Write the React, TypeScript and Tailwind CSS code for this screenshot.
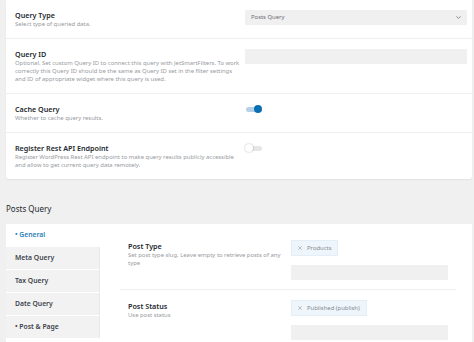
import { ChevronDown, X } from 'lucide-react';

function Toggle({ on }: { on: boolean }) {
  return (
    <div className="relative h-[10px] w-[18px] flex items-center">
      <div className={`h-[5px] w-[16px] ml-[1px] rounded-full ${on ? 'bg-[#b6d0e6]' : 'bg-[#e6e6e8]'}`} />
      <div
        className={`absolute top-[1px] h-[8px] w-[8px] rounded-full ${
          on ? 'left-[9px] bg-[#0a6fb4]' : 'left-0 bg-white shadow-[0_0_2px_rgba(0,0,0,0.3)]'
        }`}
      />
    </div>
  );
}

function SettingRow({
  title,
  desc,
  children,
  last = false
}: {
  title: string;
  desc: string;
  children?: React.ReactNode;
  last?: boolean;
}) {
  return (
    <div className={`flex pl-[9px] pt-[10px] pb-[10px] ${last ? '' : 'border-b border-[#efefef]'}`}>
      <div className="w-[230px] shrink-0 pr-[4px]">
        <div className="text-[7.2px] leading-[10px] font-semibold text-[#23282d]">{title}</div>
        <div className="text-[5.9px] leading-[8px] text-[#979aa0]">{desc}</div>
      </div>
      <div className="w-[222px]">{children}</div>
    </div>
  );
}

function Tag({ label }: { label: string }) {
  return (
    <div className="flex items-center h-[16px] pl-[5px] pr-[6px] gap-[4px] bg-[#eef5fb] border border-[#e3eef7] text-[5.9px] text-[#868a90]">
      <X className="w-[6px] h-[6px] text-[#888]" strokeWidth={2} />
      <span>{label}</span>
    </div>
  );
}

function ContentRow({
  title,
  desc,
  tag,
  last = false
}: {
  title: string;
  desc: string;
  tag: string;
  last?: boolean;
}) {
  return (
    <div className={`flex pl-[8px] pt-[10px] pb-[9px] ${last ? '' : 'border-b border-[#efefef]'}`}>
      <div className="w-[163px] shrink-0 pr-[8px] pt-[1px]">
        <div className="text-[7.2px] leading-[10px] font-semibold text-[#23282d]">{title}</div>
        <div className="text-[5.9px] leading-[8px] text-[#979aa0]">{desc}</div>
      </div>
      <div className="w-[157px] flex flex-col items-start gap-[9px]">
        <Tag label={tag} />
        <div className="self-stretch h-[15px] bg-[#f0f0f1]" />
      </div>
    </div>
  );
}

const tabs = ['• General', 'Meta Query', 'Tax Query', 'Date Query', '• Post & Page'];

export default function App() {
  return (
    <div className="w-[474px] h-[342px] overflow-hidden bg-[#f0f0f1] font-['Noto_Sans',sans-serif]">
      {/* Query settings card */}
      <div className="ml-[6px] mr-[2px] bg-white rounded-b-[3px] shadow-[0_1px_2px_rgba(0,0,0,0.06)]">
        <SettingRow title="Query Type" desc="Select type of queried data.">
          <div className="h-[15px] bg-[#f0f0f1] flex items-center justify-between pl-[6px] pr-[5px]">
            <span className="text-[5.9px] text-[#6b6e73]">Posts Query</span>
            <ChevronDown className="w-[7px] h-[7px] text-[#666]" strokeWidth={2.5} />
          </div>
        </SettingRow>
        <SettingRow
          title="Query ID"
          desc="Optional. Set custom Query ID to connect this query with JetSmartFilters. To work correctly this Query ID should be the same as Query ID set in the filter settings and ID of appropriate widget where this query is used."
        >
          <div className="h-[15px] bg-[#f0f0f1]" />
        </SettingRow>
        <SettingRow title="Cache Query" desc="Whether to cache query results.">
          <Toggle on />
        </SettingRow>
        <SettingRow
          title="Register Rest API Endpoint"
          desc="Register WordPress Rest API endpoint to make query results publicly accessible and allow to get current query data remotely."
          last
        >
          <Toggle on={false} />
        </SettingRow>
      </div>

      {/* Posts Query header */}
      <div className="h-[45px] flex items-end pl-[6px] pb-[10px]">
        <h2 className="text-[8px] leading-[10px] text-[#23282d]">Posts Query</h2>
      </div>

      {/* Tabs panel */}
      <div className="ml-[6px] mr-[2px] bg-white flex">
        <div className="w-[94px] shrink-0 flex flex-col">
          {tabs.map((t, i) => (
            <div
              key={t}
              className={`h-[23px] flex items-center pl-[9px] text-[6.8px] font-semibold border-b border-white ${
                i === 0 ? 'bg-white text-[#2b7fb8]' : 'bg-[#f2f2f3] text-[#3c434a] border-r border-r-[#e8e8e8]'
              }`}
            >
              {t}
            </div>
          ))}
        </div>
        <div className="w-[336px] ml-[20px] pt-[6px]">
          <ContentRow
            title="Post Type"
            desc="Set post type slug. Leave empty to retrieve posts of any type"
            tag="Products"
          />
          <ContentRow title="Post Status" desc="Use post status" tag="Published (publish)" last />
        </div>
      </div>
    </div>
  );
}
